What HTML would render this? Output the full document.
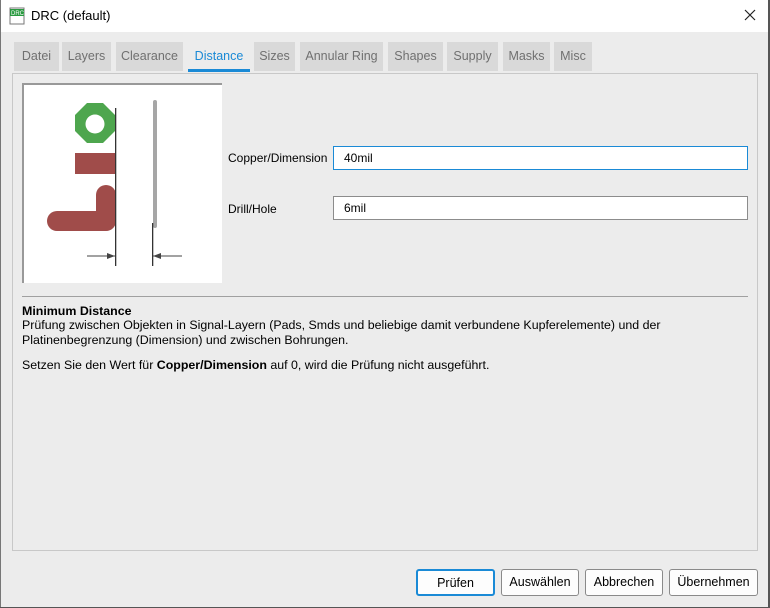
<!DOCTYPE html>
<html><head><style>
*{margin:0;padding:0;box-sizing:border-box}
body{width:770px;height:608px;background:#ececec;font-family:"Liberation Sans",sans-serif;font-size:12px;color:#000;position:relative;overflow:hidden}
.abs{position:absolute}
.title{left:0;top:0;width:770px;height:32px;background:#fff}
.tab{position:absolute;top:42px;height:29px;background:#d9d9d9;color:#707070;font-size:12.5px;text-align:center;line-height:29px}
.tab.act{background:#ececec;color:#1a8ad6}
.inp{position:absolute;left:333px;width:415px;height:24px;background:#fff;border:1px solid #8c8c8c;padding-left:10px;line-height:22px;font-size:12px;color:#000}
.btn{position:absolute;top:569px;height:27px;background:#fdfdfd;border:1px solid #8a8a8a;border-radius:3px;text-align:center;line-height:25px;font-size:12.5px}
.desc{font-size:12.4px}
</style></head><body>
<div class="abs title"></div>
<div class="abs" style="left:0;top:0;width:1px;height:608px;background:#777"></div>
<div class="abs" style="right:0;top:0;width:2px;height:608px;background:#555"></div>
<div class="abs" style="left:0;top:607px;width:770px;height:1px;background:#555"></div>
<svg class="abs" style="left:9px;top:7px" width="16" height="18"><rect x="1" y="1" width="14" height="16" fill="#fff" stroke="#777"/><rect x="1" y="2" width="14" height="7" fill="#2a9a40"/><text x="2" y="8" font-size="6" fill="#fff" font-family="Liberation Sans">DRC</text></svg>
<div class="abs" style="left:31px;top:8px;font-size:13px">DRC (default)</div>
<svg class="abs" style="left:744px;top:9px" width="12" height="12"><path d="M1 1L11 11M11 1L1 11" stroke="#222" stroke-width="1.2"/></svg>

<div class="tab" style="left:14px;width:45px">Datei</div>
<div class="tab" style="left:62px;width:49px">Layers</div>
<div class="tab" style="left:116px;width:67px">Clearance</div>
<div class="tab act" style="left:188px;width:62px">Distance</div>
<div class="abs" style="left:188px;top:69px;width:62px;height:3px;background:#1a8ad6"></div>
<div class="tab" style="left:254px;width:41px">Sizes</div>
<div class="tab" style="left:300px;width:83px">Annular Ring</div>
<div class="tab" style="left:388px;width:55px">Shapes</div>
<div class="tab" style="left:447px;width:51px">Supply</div>
<div class="tab" style="left:503px;width:47px">Masks</div>
<div class="tab" style="left:554px;width:38px">Misc</div>

<div class="abs" style="left:12px;top:73px;width:746px;height:478px;border:1px solid #c8c8c8"></div>

<svg class="abs" style="left:22px;top:83px" width="200" height="200">
<rect width="200" height="200" fill="#fff"/>
<rect x="0" y="0" width="200" height="2" fill="#999"/>
<rect x="0" y="0" width="2" height="200" fill="#999"/>
<polygon points="65,20 81,20 93,32 93,48 81,60 65,60 53,48 53,32" fill="#4ea64e"/>
<circle cx="73" cy="41" r="9.5" fill="#fff"/>
<rect x="53" y="70" width="41" height="21" fill="#a04c4a"/>
<clipPath id="c"><rect x="0" y="0" width="93" height="200"/></clipPath>
<polyline points="35,138 84,138 84,112" fill="none" stroke="#a04c4a" stroke-width="20" stroke-linecap="round" stroke-linejoin="round" clip-path="url(#c)"/>
<rect x="93" y="25" width="1.3" height="158" fill="#333"/>
<rect x="131" y="17" width="4" height="128" rx="2" fill="#a6a6a6"/>
<rect x="130" y="140" width="1.3" height="43" fill="#333"/>
<line x1="65" y1="173" x2="93" y2="173" stroke="#444"/>
<polygon points="85,170 93,173 85,176" fill="#444"/>
<line x1="131" y1="173" x2="160" y2="173" stroke="#444"/>
<polygon points="139,170 131,173 139,176" fill="#444"/>
</svg>

<div class="abs" style="left:228px;top:151px">Copper/Dimension</div>
<div class="inp" style="top:146px;border-color:#1a8ad6">40mil</div>
<div class="abs" style="left:228px;top:202px">Drill/Hole</div>
<div class="inp" style="top:196px">6mil</div>

<div class="abs" style="left:22px;top:296px;width:726px;height:1px;background:#a0a0a0"></div>
<div class="abs desc" style="left:22px;top:304px;font-weight:bold">Minimum Distance</div>
<div class="abs desc" style="left:22px;top:318px;line-height:15px;width:740px">Prüfung zwischen Objekten in Signal-Layern (Pads, Smds und beliebige damit verbundene Kupferelemente) und der<br>Platinenbegrenzung (Dimension) und zwischen Bohrungen.</div>
<div class="abs desc" style="left:22px;top:358px">Setzen Sie den Wert für <b>Copper/Dimension</b> auf 0, wird die Prüfung nicht ausgeführt.</div>

<div class="btn" style="left:416px;width:79px;border:2px solid #1a8ad6">Prüfen</div>
<div class="btn" style="left:501px;width:78px">Auswählen</div>
<div class="btn" style="left:585px;width:78px">Abbrechen</div>
<div class="btn" style="left:669px;width:89px">Übernehmen</div>
</body></html>
